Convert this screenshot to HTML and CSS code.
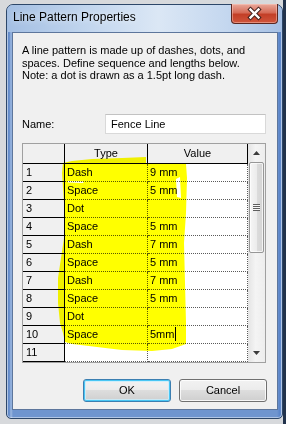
FILE: index.html
```html
<!DOCTYPE html>
<html lang="en">
  <head>
    <meta name="viewport" content="width=device-width, initial-scale=1.0" />
    <title>Line Pattern Properties</title>
    <link rel="stylesheet" href="styles.css" />
  </head>
  <body>
    <div class="dialog">
      <!-- Caption -->
      <div class="titlebar">
        <span class="title">Line Pattern Properties</span>
        <button class="close-btn" aria-label="Close">
          <svg width="45" height="18" viewBox="0 0 45 18">
            <path d="M18.5 4.5 L26.5 12.5 M26.5 4.5 L18.5 12.5" stroke="#40201c" stroke-width="4.4" stroke-linecap="square" fill="none" />
            <path d="M18.5 4.5 L26.5 12.5 M26.5 4.5 L18.5 12.5" stroke="#ffffff" stroke-width="2.4" stroke-linecap="square" fill="none" />
          </svg>
        </button>
      </div>

      <!-- Client area -->
      <div class="client">
        <p class="intro">
          A line pattern is made up of dashes, dots, and<br />
          spaces. Define sequence and lengths below.<br />
          Note: a dot is drawn as a 1.5pt long dash.
        </p>

        <div class="name-row">
          <label for="pattern-name">Name:</label>
          <input type="text" id="pattern-name" value="Fence Line" />
        </div>

        <div class="grid-box">
          <table class="pattern">
            <colgroup>
              <col class="col-num" />
              <col class="col-type" />
              <col class="col-value" />
            </colgroup>
            <thead>
              <tr><th></th><th>Type</th><th>Value</th></tr>
            </thead>
            <tbody>
              <tr><td class="num">1</td><td>Dash</td><td>9 mm</td></tr>
              <tr><td class="num">2</td><td>Space</td><td>5 mm</td></tr>
              <tr><td class="num">3</td><td>Dot</td><td></td></tr>
              <tr><td class="num">4</td><td>Space</td><td>5 mm</td></tr>
              <tr><td class="num">5</td><td>Dash</td><td>7 mm</td></tr>
              <tr><td class="num">6</td><td>Space</td><td>5 mm</td></tr>
              <tr><td class="num">7</td><td>Dash</td><td>7 mm</td></tr>
              <tr><td class="num">8</td><td>Space</td><td>5 mm</td></tr>
              <tr><td class="num">9</td><td>Dot</td><td></td></tr>
              <tr><td class="num">10</td><td>Space</td><td>5mm<span class="caret"></span></td></tr>
              <tr><td class="num">11</td><td></td><td></td></tr>
            </tbody>
          </table>

          <div class="scrollbar">
            <div class="sb-arrow">
              <svg width="7" height="4" viewBox="0 0 7 4"><polygon points="0,4 3.5,0 7,4" fill="#3c3c3c" /></svg>
            </div>
            <div class="sb-thumb"><span class="grip"></span></div>
            <div class="sb-track"></div>
            <div class="sb-arrow">
              <svg width="7" height="4" viewBox="0 0 7 4"><polygon points="0,0 7,0 3.5,4" fill="#3c3c3c" /></svg>
            </div>
          </div>

          <!-- hand-drawn marker over the Type / Value columns -->
          <svg class="marker" width="244" height="220" viewBox="0 0 244 220">
            <path fill-rule="evenodd" fill="#ffff00"
              d="M41 20 L50 18 L70 16 L100 15 L124 14 L124 21 L164 21 L165 35 L164 70 L162 100 L163 140 L164 180 L164 201
                 L150 206 L130 208 L100 207 L75 204 L50 201 L43 199 L41 190 L38 180 L36 160 L36 135 L39 115 L42 95 L42 60 L40 30 Z
                 M154 36 L158 34 L159 55 L155 54 Z
                 M46 38 L62 38.5 L61 40 L46 39.5 Z" />
          </svg>
        </div>

        <div class="buttons">
          <button class="btn btn-default">OK</button>
          <button class="btn">Cancel</button>
        </div>
      </div>
    </div>
  </body>
</html>
```

FILE: styles.css
```css
* {
  margin: 0;
  padding: 0;
  box-sizing: border-box;
}
body {
  width: 286px;
  height: 424px;
  overflow: hidden;
  padding: 4px 0 0 6px;
  font-family: "Liberation Sans", Arial, sans-serif;
  font-size: 11px;
  color: #000000;
  background: linear-gradient(90deg, #d7d9dc 0, #d7d9dc 283px, #22334c 283px);
}

/* Window frame */
.dialog {
  width: 277px;
  height: 415px;
  display: flex;
  flex-direction: column;
  padding: 0 4px 8px 5px;
  border: 1px solid #2d4769;
  border-radius: 7px 7px 5px 5px;
  background: linear-gradient(90deg, #7c9fd3 0, #5a84c6 2px, #9db8e0 4px, #6f95cf 6px, #6f95cf 270px, #5883c8 273px, #8eaedd 276px);
  box-shadow: inset 0 0 0 1px rgba(255, 255, 255, 0.45);
}
.titlebar {
  height: 27px;
  display: flex;
  align-items: flex-start;
  margin: 0 -4px 0 -5px;
  padding: 0 4px 0 6px;
  border-radius: 6px 6px 0 0;
  background: linear-gradient(90deg, #a4bfe3 0, #c2d6ee 30%, #dbe7f5 55%, #c4d7ef 80%, #a6c0e4 100%);
}
.title {
  font-size: 12px;
  line-height: 15px;
  margin-top: 5px;
  text-shadow: 0 0 6px rgba(255, 255, 255, 0.9);
}
.close-btn {
  margin-left: auto;
  margin-top: -1px;
  width: 47px;
  height: 20px;
  border: 1px solid #5b2620;
  border-top: none;
  border-radius: 0 0 4px 4px;
  background: linear-gradient(180deg, #e9a99b 0, #d66c58 45%, #c33f27 55%, #d0553c 100%);
  box-shadow: inset 0 0 0 1px rgba(255, 210, 200, 0.45);
  display: grid;
  place-items: center;
}

/* Client area */
.client {
  flex: 1;
  display: flex;
  flex-direction: column;
  background-color: #f0f0f0;
  border: 1px solid #5d769c;
}
.intro {
  padding: 11px 0 0 9px;
  line-height: 12.5px;
}
.name-row {
  display: flex;
  align-items: center;
  height: 20px;
  margin-top: 32px;
  padding-left: 9px;
}
.name-row label {
  width: 83px;
}
.name-row input {
  width: 161px;
  height: 20px;
  padding: 0 5px;
  font: inherit;
  border: 1px solid #d9d9d9;
  border-top-color: #c2c2c2;
  background-color: #ffffff;
  outline: none;
}

/* Pattern grid */
.grid-box {
  position: relative;
  display: flex;
  width: 244px;
  height: 220px;
  margin: 9px 0 0 9px;
  border: 1px solid #a0a0a0;
  background-color: #ffffff;
}
.pattern {
  table-layout: fixed;
  border-collapse: separate;
  border-spacing: 0;
  width: 225px;
  align-self: flex-start;
}
.col-num {
  width: 42px;
}
.col-type {
  width: 83px;
}
.col-value {
  width: 100px;
}
.pattern th {
  height: 20px;
  font-weight: normal;
  text-align: center;
  background-color: #f0f0f0;
  border-right: 1px solid #000000;
  border-bottom: 1px solid #000000;
}
.pattern td {
  height: 18px;
  padding: 0 2px;
  white-space: nowrap;
  border-right: 1px dotted #5a5a5a;
  border-bottom: 1px dotted #5a5a5a;
}
.pattern td.num {
  padding-left: 3px;
  background-color: #f0f0f0;
  border-right: 1px solid #000000;
  border-bottom: 1px solid #000000;
}
.caret {
  display: inline-block;
  width: 1px;
  height: 14px;
  margin-left: 1px;
  vertical-align: -3px;
  background-color: #000000;
}
.scrollbar {
  width: 17px;
  display: flex;
  flex-direction: column;
  align-items: center;
  background: linear-gradient(90deg, #e4e4e4, #f4f4f4 45%, #ededed);
}
.sb-arrow {
  width: 17px;
  height: 18px;
  display: grid;
  place-items: center;
}
.sb-thumb {
  width: 15px;
  height: 91px;
  display: grid;
  place-items: center;
  border: 1px solid #979797;
  border-radius: 2px;
  background: linear-gradient(90deg, #f6f6f6, #ececec 50%, #dcdcdc 52%, #d4d4d4);
  box-shadow: inset 0 0 0 1px rgba(255, 255, 255, 0.7);
}
.grip {
  width: 7px;
  height: 7px;
  background: repeating-linear-gradient(180deg, #5e5e5e 0, #5e5e5e 1px, #f7f7f7 1px, #f7f7f7 2px);
}
.sb-track {
  flex: 1;
}
.marker {
  position: absolute;
  top: -1px;
  left: -1px;
  pointer-events: none;
  mix-blend-mode: multiply;
}

/* Buttons */
.buttons {
  display: flex;
  justify-content: flex-end;
  gap: 8px;
  margin-top: 16px;
  padding-right: 10px;
}
.btn {
  width: 88px;
  height: 23px;
  font: inherit;
  color: #000000;
  border: 1px solid #707070;
  border-radius: 3px;
  background: linear-gradient(180deg, #f2f2f2 0, #ebebeb 50%, #dddddd 50%, #cfcfcf 100%);
  box-shadow: inset 0 0 0 1px rgba(255, 255, 255, 0.8);
}
.btn-default {
  border-color: #3c7fb1;
  box-shadow: inset 0 0 0 1px #48c6f4, inset 0 0 0 2px rgba(200, 238, 252, 0.8);
}
```
